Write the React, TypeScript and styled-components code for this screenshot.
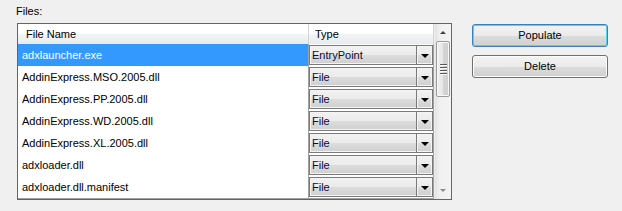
import React from "react";
import styled, { createGlobalStyle } from "styled-components";

const Global = createGlobalStyle`
  html, body { margin: 0; padding: 0; background: #f0f0f0; }
  body { font-family: "Liberation Sans", Arial, sans-serif; font-size: 11px; color: #000; }
`;

const Page = styled.div`
  width: 622px;
  height: 211px;
  background: #f0f0f0;
  display: flex;
  align-items: flex-start;
  padding: 5px 0 0 16px;
  box-sizing: border-box;
`;

const LeftCol = styled.div`
  display: flex;
  flex-direction: column;
`;

const Label = styled.div`
  height: 18px;
  line-height: 12px;
`;

const Grid = styled.div`
  margin-left: 1px;
  width: 435px;
  height: 177px;
  box-sizing: border-box;
  border: 1px solid #646464;
  background: #fff;
  display: flex;
  overflow: hidden;
`;

const Body = styled.div`
  width: 416px;
  display: flex;
  flex-direction: column;
  overflow: hidden;
`;

const HeaderRow = styled.div`
  display: grid;
  grid-template-columns: 291px 125px;
  height: 20px;
  flex-shrink: 0;
`;

const HeaderCell = styled.div<{ $pad: number }>`
  box-sizing: border-box;
  background: linear-gradient(#ffffff 0%, #ffffff 50%, #f3f4f6 51%, #eaebee 100%);
  border-right: 1px solid #d5d5d5;
  border-bottom: 1px solid #d5d5d5;
  padding-left: ${(p) => p.$pad}px;
  line-height: 20px;
  color: #000;
`;

const Row = styled.div`
  display: grid;
  grid-template-columns: 291px 125px;
  height: 22px;
  flex-shrink: 0;
`;

const NameCell = styled.div<{ $selected?: boolean }>`
  box-sizing: border-box;
  border-right: 1px solid #a0a0a0;
  border-bottom: 1px solid #a0a0a0;
  background: ${(p) => (p.$selected ? "#3399ff" : "#fff")};
  color: ${(p) => (p.$selected ? "#fff" : "#000")};
  padding-left: 4px;
  line-height: 22px;
  white-space: nowrap;
`;

const TypeCell = styled.div`
  box-sizing: border-box;
  border-right: 1px solid #a0a0a0;
  border-bottom: 1px solid #a0a0a0;
  background: #fff;
  padding: 1px 0 0 0;
`;

const Combo = styled.div`
  box-sizing: border-box;
  height: 20px;
  border: 1px solid #7a7a7a;
  box-shadow: inset 0 0 0 1px #f4f4f4;
  background: linear-gradient(#f2f2f2 0%, #ebebeb 50%, #dddddd 51%, #cfcfcf 100%);
  display: flex;
  align-items: stretch;
`;

const ComboText = styled.div`
  flex: 1;
  padding-left: 2px;
  line-height: 18px;
  color: #0a0a3a;
`;

const ComboButton = styled.div`
  width: 15px;
  border-left: 1px solid #7a7a7a;
  display: flex;
  align-items: center;
  justify-content: center;
  box-shadow: inset 1px 0 0 #f4f4f4;
`;

const Arrow = styled.div`
  width: 0;
  height: 0;
  border-left: 4px solid transparent;
  border-right: 4px solid transparent;
  border-top: 4px solid #000;
  margin-top: 1px;
`;

const ScrollBar = styled.div`
  width: 17px;
  background: linear-gradient(90deg, #e3e3e3, #f0f0f0 30%, #f4f4f4);
  border-left: 1px solid #ededed;
  box-sizing: border-box;
  display: flex;
  flex-direction: column;
`;

const ScrollBtn = styled.div`
  height: 17px;
  display: flex;
  align-items: center;
  justify-content: center;
  flex-shrink: 0;
`;

const Tri = styled.div<{ $up?: boolean; $color: string }>`
  width: 0;
  height: 0;
  border-left: 3px solid transparent;
  border-right: 3px solid transparent;
  ${(p) =>
    p.$up
      ? `border-bottom: 3px solid ${p.$color};`
      : `border-top: 3px solid ${p.$color};`}
`;

const Thumb = styled.div`
  margin: 0 1px 0 1px;
  height: 56px;
  box-sizing: border-box;
  border: 1px solid #9b9b9b;
  border-radius: 2px;
  background: linear-gradient(90deg, #f2f2f2, #e6e6e6 50%, #d5d5d5 51%, #cfcfcf);
  box-shadow: inset 0 0 0 1px #f8f8f8;
  display: flex;
  flex-direction: column;
  align-items: center;
  justify-content: center;
  gap: 1px;
`;

const Grip = styled.div`
  width: 7px;
  height: 1px;
  background: #5a5a5a;
  box-shadow: 0 1px 0 #fafafa;
  margin-bottom: 1px;
`;

const Spacer = styled.div`
  flex: 1;
`;

const RightCol = styled.div`
  display: flex;
  flex-direction: column;
  gap: 8px;
  margin-left: 20px;
  margin-top: 19px;
`;

const Button = styled.button<{ $default?: boolean }>`
  width: 136px;
  height: 23px;
  box-sizing: border-box;
  font-family: "Liberation Sans", Arial, sans-serif;
  font-size: 11px;
  color: #000;
  border-radius: 3px;
  border: 1px solid ${(p) => (p.$default ? "#3c7fb1" : "#707070")};
  background: linear-gradient(#f2f2f2 0%, #ebebeb 50%, #dddddd 51%, #cfcfcf 100%);
  box-shadow: inset 0 0 0 1px ${(p) => (p.$default ? "#48d8fb" : "#fcfcfc")};
  padding: 0;
  line-height: 19px;
`;

const files: { name: string; type: string }[] = [
  { name: "adxlauncher.exe", type: "EntryPoint" },
  { name: "AddinExpress.MSO.2005.dll", type: "File" },
  { name: "AddinExpress.PP.2005.dll", type: "File" },
  { name: "AddinExpress.WD.2005.dll", type: "File" },
  { name: "AddinExpress.XL.2005.dll", type: "File" },
  { name: "adxloader.dll", type: "File" },
  { name: "adxloader.dll.manifest", type: "File" },
];

export default function App() {
  return (
    <>
      <Global />
      <Page>
        <LeftCol>
          <Label>Files:</Label>
          <Grid>
            <Body>
              <HeaderRow>
                <HeaderCell $pad={8}>File Name</HeaderCell>
                <HeaderCell $pad={6}>Type</HeaderCell>
              </HeaderRow>
              {files.map((f, i) => (
                <Row key={f.name}>
                  <NameCell $selected={i === 0}>{f.name}</NameCell>
                  <TypeCell>
                    <Combo>
                      <ComboText>{f.type}</ComboText>
                      <ComboButton>
                        <Arrow />
                      </ComboButton>
                    </Combo>
                  </TypeCell>
                </Row>
              ))}
            </Body>
            <ScrollBar>
              <ScrollBtn>
                <Tri $up $color="#404040" />
              </ScrollBtn>
              <Thumb>
                <Grip />
                <Grip />
                <Grip />
                <Grip />
              </Thumb>
              <Spacer />
              <ScrollBtn>
                <Tri $color="#8a8a8a" />
              </ScrollBtn>
            </ScrollBar>
          </Grid>
        </LeftCol>
        <RightCol>
          <Button $default>Populate</Button>
          <Button>Delete</Button>
        </RightCol>
      </Page>
    </>
  );
}
